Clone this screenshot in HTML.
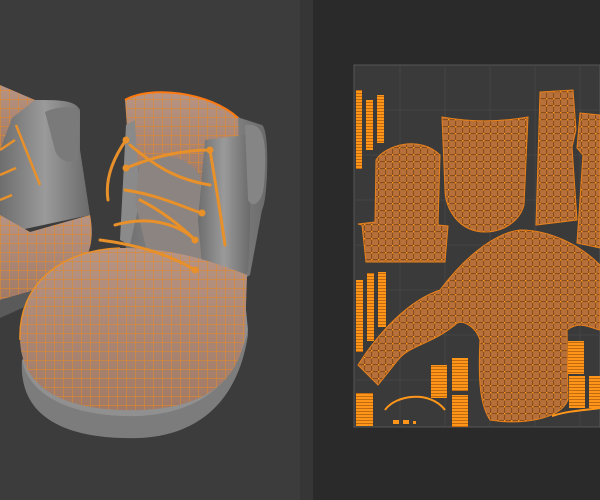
<!DOCTYPE html>
<html><head><style>
html,body{margin:0;padding:0;width:600px;height:500px;overflow:hidden;background:#2a2a2a}
</style></head><body>
<svg width="600" height="500" viewBox="0 0 600 500" xmlns="http://www.w3.org/2000/svg">
<defs>
<pattern id="uv" width="7" height="7" patternUnits="userSpaceOnUse">
<rect width="7" height="7" fill="#b8703a"/>
<path d="M0 0.5H7M0.5 0V7" stroke="#8a4e1c" stroke-width="1.2"/>
<circle cx="0.5" cy="0.5" r="1" fill="#ff9a1a"/>
</pattern>
<pattern id="bar" width="4" height="3" patternUnits="userSpaceOnUse">
<rect width="4" height="3" fill="#ff961a"/>
<path d="M0 0.5H4" stroke="#c26a10" stroke-width="1"/>
</pattern>
<pattern id="mesh" width="9" height="9" patternUnits="userSpaceOnUse">
<path d="M0 0.5H9M0.5 0V9" stroke="#e08a2a" stroke-width="0.7" opacity="0.8"/>
</pattern>
<linearGradient id="gr" x1="0" y1="0" x2="1" y2="0">
<stop offset="0" stop-color="#6e6e6e"/><stop offset="0.5" stop-color="#9a9a9a"/><stop offset="1" stop-color="#6a6a6a"/>
</linearGradient>
<linearGradient id="tan" x1="0" y1="0" x2="0" y2="1">
<stop offset="0" stop-color="#b89484"/><stop offset="1" stop-color="#a07a66"/>
</linearGradient>
</defs>
<!-- left viewport -->
<rect x="0" y="0" width="300" height="500" fill="#3c3c3c"/>
<rect x="300" y="0" width="13" height="500" fill="#363636"/>
<!-- left boot -->
<path d="M0 85 L35 100 L40 140 L0 150Z" fill="url(#tan)"/>
<path d="M0 85 L35 100 L40 140 L0 150Z" fill="url(#mesh)"/>
<path d="M35 100 C60 100 75 100 80 110 L80 150 L90 215 L20 230 L0 220 L0 150 L12 118Z" fill="url(#gr)"/>
<path d="M45 112 C60 105 80 105 80 115 L78 160 C70 165 58 160 55 150Z" fill="#7a7a7a"/>
<path d="M0 215 L30 232 L90 215 C95 240 90 260 70 280 L0 300Z" fill="url(#tan)"/>
<path d="M0 215 L30 232 L90 215 C95 240 90 260 70 280 L0 300Z" fill="url(#mesh)"/>
<path d="M0 300 L70 280 L40 300 L0 318Z" fill="#5a5a5a"/>
<g stroke="#e8902a" stroke-width="2.5" fill="none">
<path d="M16 125 L40 185"/><path d="M0 150 L15 140"/><path d="M0 175 L16 168"/><path d="M0 200 L12 195"/>
</g>
<!-- right boot sole -->
<path d="M22 360 C18 420 70 440 140 438 C200 435 238 400 248 335 L245 300 L30 350Z" fill="#7c7c7c"/>
<path d="M22 360 C30 400 80 418 140 416 C200 412 235 385 248 330 L245 300Z" fill="#909090"/>
<!-- collar -->
<path d="M125 100 C150 85 210 92 240 118 L262 125 C270 130 268 200 262 210 L250 275 L210 300 L130 290 L125 240 L135 160Z" fill="url(#gr)"/>
<path d="M125 100 C150 85 210 92 238 118 L240 180 L200 185 C180 170 150 170 130 165Z" fill="url(#tan)"/>
<path d="M125 100 C150 85 210 92 238 118 L240 180 L200 185 C180 170 150 170 130 165Z" fill="url(#mesh)"/>
<path d="M125 100 C150 85 210 92 238 118" stroke="#ff7a10" stroke-width="2" fill="none"/>
<path d="M126 125 L135 120 L140 200 L130 245 L120 240Z" fill="#8a8a8a"/>
<path d="M140 160 C170 150 190 160 200 175 L205 280 L150 265 L135 200Z" fill="#8c8480"/>
<path d="M205 140 L245 135 C250 140 252 220 248 270 C240 290 215 300 205 298 L198 220Z" fill="url(#gr)"/>
<path d="M245 125 C262 122 268 135 264 185 C262 205 252 208 248 200Z" fill="#858585"/>
<!-- toe -->
<path d="M20 340 C18 285 60 250 120 248 C170 247 215 262 247 275 L245 335 C238 385 200 408 140 410 C70 412 22 392 20 340Z" fill="url(#tan)"/>
<path d="M20 340 C18 285 60 250 120 248 C170 247 215 262 247 275 L245 335 C238 385 200 408 140 410 C70 412 22 392 20 340Z" fill="url(#mesh)"/>
<path d="M20 340 C18 285 60 250 120 248" stroke="#e8902a" stroke-width="1.5" fill="none"/>
<!-- laces -->
<g stroke="#e8902a" stroke-width="3" fill="none" stroke-linecap="round">
<path d="M126 140 C112 160 105 180 108 200"/>
<path d="M126 168 C170 150 200 150 210 150"/>
<path d="M130 145 C160 170 180 180 210 185"/>
<path d="M125 190 C160 195 190 210 202 213"/>
<path d="M210 150 C215 180 220 210 225 245"/>
<path d="M115 225 C150 215 180 225 195 240"/>
<path d="M100 240 C140 245 170 255 195 270"/>
<path d="M140 200 C160 210 180 225 195 240"/>
</g>
<g fill="#e8902a"><circle cx="126" cy="140" r="3.5"/><circle cx="210" cy="150" r="3.5"/><circle cx="202" cy="213" r="3.5"/><circle cx="195" cy="240" r="3.5"/><circle cx="195" cy="270" r="3.5"/><circle cx="126" cy="168" r="3.5"/></g>
<!-- UV editor -->
<rect x="354" y="65" width="246" height="362" fill="#3a3a3a" stroke="#555" stroke-width="1"/>
<g stroke="#444" stroke-width="1"><path d="M400 65V427M445 65V427M490 65V427M535 65V427M580 65V427M354 110H600M354 155H600M354 200H600M354 245H600M354 290H600M354 335H600M354 380H600"/></g>
<g fill="url(#bar)">
<rect x="356" y="90" width="6" height="78"/><rect x="356" y="143" width="6" height="25"/><rect x="356" y="143" width="6" height="26"/>
<rect x="366" y="100" width="7" height="50"/><rect x="377" y="95" width="7" height="48"/>
<rect x="356" y="280" width="7" height="72"/><rect x="367" y="273" width="7" height="68"/><rect x="378" y="272" width="8" height="55"/>
<rect x="356" y="393" width="17" height="33"/><rect x="431" y="365" width="16" height="33"/><rect x="452" y="358" width="16" height="33"/><rect x="452" y="395" width="16" height="32"/>
<rect x="568" y="341" width="16" height="33"/><rect x="569" y="376" width="16" height="32"/><rect x="589" y="376" width="11" height="32"/>
<rect x="356" y="166" width="6" height="2"/>
</g>
<g fill="url(#uv)" stroke="#e8801a" stroke-width="1">
<path d="M376 160 C385 145 420 135 440 155 L438 225 L448 226 L445 262 L366 262 L362 225 L358 224 L375 222Z"/>
<path d="M442 117 C470 122 500 122 528 117 L524 205 C520 220 505 232 485 232 C460 232 445 210 445 190Z"/>
<path d="M540 92 L573 90 L576 130 L572 147 L577 220 L536 225Z"/>
<path d="M580 113 L600 115 L600 248 L577 243 L583 155 L577 148Z"/>
<path d="M358 365 C380 330 410 300 440 290 C470 250 500 232 520 230 C550 230 580 245 600 265 L600 330 C590 328 580 320 567 330 L568 400 C560 420 520 425 490 420 C480 405 478 380 480 340 C475 325 460 318 455 325 C430 345 410 345 398 360 L378 385Z"/>
</g>
<g fill="none" stroke="#ff961a" stroke-width="2">
<path d="M385 410 C395 395 430 390 445 410"/>
<path d="M552 416 C570 410 590 410 600 408"/>
</g>
<rect x="393" y="420" width="6" height="4" fill="#ff961a"/><rect x="403" y="420" width="6" height="4" fill="#ff961a"/><rect x="413" y="421" width="3" height="3" fill="#ff961a"/>
</svg>
</body></html>
